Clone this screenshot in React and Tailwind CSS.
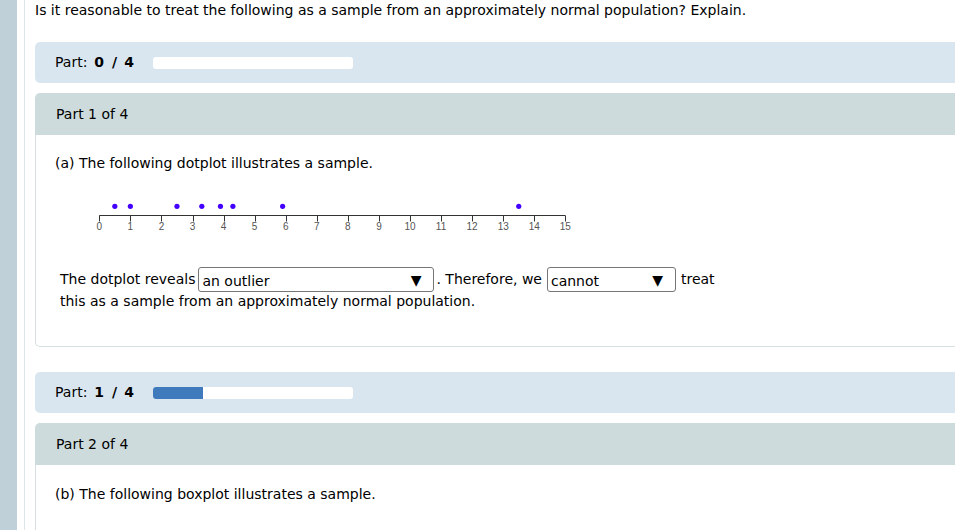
import React from "react";

const OFFX = 85;
const OFFY = 195;
const x0 = 99.3;
const step = 31.07;
const tx = (v) => x0 + step * v - OFFX;

function Dotplot() {
  const ticks = Array.from({ length: 16 }, (_, i) => i);
  const dots = [0.5, 1, 2.5, 3.3, 3.9, 4.3, 5.9, 13.5];
  const ay = 215.5 - OFFY;
  return (
    <svg width="500" height="40" viewBox="0 0 500 40" className="block ml-[49px] mt-[22px]">
      <line x1={tx(0)} y1={ay} x2={tx(15)} y2={ay} stroke="#333" strokeWidth="1" />
      {ticks.map((t) => (
        <g key={t}>
          <line x1={Math.round(tx(t)) + 0.5} y1={ay} x2={Math.round(tx(t)) + 0.5} y2={ay + 6} stroke="#333" strokeWidth="1" />
          <text x={tx(t)} y={ay + 14.5} textAnchor="middle" fontSize="10" fill="#555" fontFamily="Liberation Sans, Arial, sans-serif">
            {t}
          </text>
        </g>
      ))}
      {dots.map((d, i) => (
        <circle key={i} cx={tx(d)} cy={206.3 - OFFY} r="2.6" fill="#4400ff" />
      ))}
    </svg>
  );
}

function Select({ label, width }) {
  return (
    <div
      className={`flex h-[25px] items-center justify-between rounded-[3px] border border-[#767676] bg-white pl-[3px] pr-[12px] ${width}`}
    >
      <span className="leading-none pt-[2px]">{label}</span>
      <span className="text-[14px] leading-none">▼</span>
    </div>
  );
}

function PartBar({ done, pct }) {
  return (
    <div className="flex h-[41px] items-center rounded-[5px] bg-[#d9e6f0] pl-[20px]">
      <div className="flex w-[98px]">
        <span>Part:</span>
        <span className="ml-[7px] font-bold">{done}</span>
        <span className="ml-[8px] font-bold">/</span>
        <span className="ml-[7px] font-bold">4</span>
      </div>
      <div className="h-[12px] w-[200px] overflow-hidden rounded-[3px] bg-white">
        <div className="h-full bg-[#3f7abd]" style={{ width: `${pct}%` }} />
      </div>
    </div>
  );
}

function Header({ text }) {
  return (
    <div className="flex h-[42px] items-center rounded-tl-[5px] bg-[#cddbdc] pl-[21px]">{text}</div>
  );
}

export default function App() {
  return (
    <div className="flex h-[530px] w-[955px] overflow-hidden bg-white text-[14px] text-black font-['DejaVu_Sans',Verdana,sans-serif]">
      <div className="w-[17px] shrink-0 bg-[#bfd0d8]" />
      <div className="w-[7px] shrink-0" />
      <div className="w-px shrink-0 bg-[#dde6ea]" />
      <div className="w-[960px] shrink-0 pl-[10px]">
        <div className="h-[20px] leading-[20px]">
          Is it reasonable to treat the following as a sample from an approximately normal population? Explain.
        </div>
        <div className="mt-[22px]">
          <PartBar done={0} pct={0} />
        </div>
        <div className="mt-[10px]">
          <Header text="Part 1 of 4" />
          <div className="h-[212px] rounded-bl-[5px] border-b border-l border-[#d6e0e2]">
            <div className="pl-[19px] pt-[18px] leading-[20px]">(a) The following dotplot illustrates a sample.</div>
            <Dotplot />
            <div className="mt-[32px] pl-[24px]">
              <div className="flex h-[25px] items-center">
                <span>The dotplot reveals</span>
                <div className="ml-[3px]">
                  <Select label="an outlier" width="w-[236px]" />
                </div>
                <span className="ml-[2px]">. Therefore, we</span>
                <div className="ml-[5px]">
                  <Select label="cannot" width="w-[129px]" />
                </div>
                <span className="ml-[5px]">treat</span>
              </div>
              <div className="h-[19px] leading-[19px]">this as a sample from an approximately normal population.</div>
            </div>
          </div>
        </div>
        <div className="mt-[25px]">
          <PartBar done={1} pct={25} />
        </div>
        <div className="mt-[10px]">
          <Header text="Part 2 of 4" />
          <div className="h-[200px] border-l border-[#d6e0e2]">
            <div className="pl-[19px] pt-[19px] leading-[20px]">(b) The following boxplot illustrates a sample.</div>
          </div>
        </div>
      </div>
    </div>
  );
}
